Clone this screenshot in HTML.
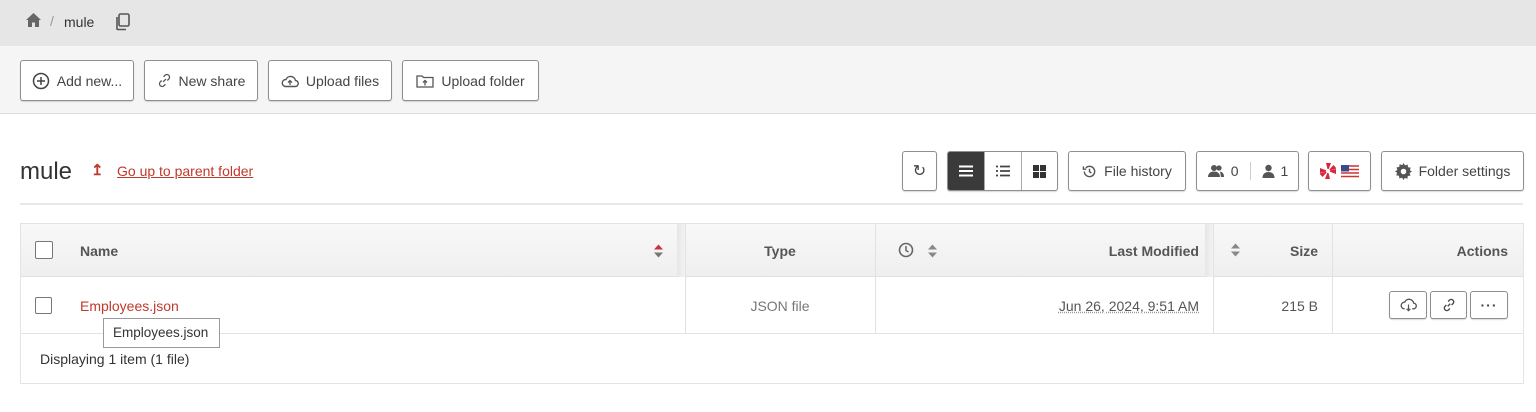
<!DOCTYPE html>
<html><head><style>
*{box-sizing:border-box;margin:0;padding:0}
body{width:1536px;height:412px;background:#fff;font-family:"Liberation Sans",sans-serif;color:#333;position:relative;overflow:hidden;font-size:14px}
.a{position:absolute}
.btn{position:absolute;border:1px solid #8f8f8f;border-radius:3px;background:#fff;display:flex;align-items:center;justify-content:center;gap:7px;font-size:14px;color:#444;box-shadow:0 1px 1px rgba(0,0,0,.15)}
svg{display:block}
.th{position:absolute;top:0;height:53px;display:flex;align-items:center;font-weight:bold;color:#555;font-size:14px}
.vl{position:absolute;top:0;width:1px;background:#e2e2e2}
</style></head><body>
<div class="a" style="left:0;top:0;width:1536px;height:46px;background:#e6e6e6"></div>
<svg class="a" style="left:25px;top:12px" width="17" height="16" viewBox="0 0 16 16"><path d="M8 1L0.5 8h2v7h4v-4.5h3V15h4V8h2z" fill="#666"/></svg>
<div class="a" style="left:50px;top:13px;color:#999">/</div>
<div class="a" style="left:64px;top:14px;font-size:14px;color:#333">mule</div>
<svg class="a" style="left:114px;top:13px" width="17" height="18" viewBox="0 0 17 18"><rect x="5" y="1" width="10" height="12" rx="1.5" fill="none" stroke="#555" stroke-width="1.6"/><path d="M3 4v11.5a1 1 0 0 0 1 1h8" fill="none" stroke="#555" stroke-width="1.6"/></svg>
<div class="a" style="left:0;top:46px;width:1536px;height:68px;background:#f5f5f5;border-bottom:1px solid #ddd"></div>
<div class="btn" style="left:20px;top:60px;width:114px;height:41px"><svg width="18" height="18" viewBox="0 0 18 18"><circle cx="9" cy="9" r="7.5" fill="none" stroke="#444" stroke-width="1.5"/><path d="M9 5v8M5 9h8" stroke="#444" stroke-width="1.5"/></svg>Add new...</div>
<div class="btn" style="left:144px;top:60px;width:114px;height:41px"><svg width="15" height="15" viewBox="0 0 16 16"><path d="M6.5 9.5l3-3M7 4l1.5-1.5a2.8 2.8 0 0 1 4 4L11 8M9 12l-1.5 1.5a2.8 2.8 0 0 1-4-4L5 8" fill="none" stroke="#555" stroke-width="1.4"/></svg>New share</div>
<div class="btn" style="left:268px;top:60px;width:124px;height:41px"><svg width="18" height="14" viewBox="0 0 18 14"><path d="M4.5 12.5h9.5a3 3 0 0 0 .5-6 5 5 0 0 0-9.5-1 3.5 3.5 0 0 0-.5 7z" fill="none" stroke="#555" stroke-width="1.4"/><path d="M9 11V6.5M7 8.5l2-2 2 2" fill="none" stroke="#555" stroke-width="1.3"/></svg>Upload files</div>
<div class="btn" style="left:402px;top:60px;width:137px;height:41px"><svg width="18" height="14" viewBox="0 0 18 14"><path d="M1 2h5l1.5 1.5H17V13H1z" fill="none" stroke="#555" stroke-width="1.3"/><path d="M9 11.5V6.5M7 8.5l2-2 2 2" fill="none" stroke="#555" stroke-width="1.3"/></svg>Upload folder</div>

<div class="a" style="left:20px;top:158px;font-size:24px;color:#333">mule</div>
<div class="a" style="left:91px;top:161px;color:#c0392b;font-size:15px;font-weight:bold">↥</div>
<div class="a" style="left:117px;top:163px;color:#c0392b;text-decoration:underline;font-size:14px">Go up to parent folder</div>

<div class="btn" style="left:902px;top:151px;width:35px;height:40px;font-size:16px">↻</div>
<div class="a" style="left:947px;top:151px;width:111px;height:40px;border:1px solid #8f8f8f;border-radius:3px;background:#fff;overflow:hidden;box-shadow:0 1px 1px rgba(0,0,0,.15)">
<div class="a" style="left:0;top:0;width:37px;height:38px;background:#3a3a3a"></div>
<svg class="a" style="left:11px;top:13px" width="14" height="12" viewBox="0 0 14 12"><path d="M0 1.5h14M0 6h14M0 10.5h14" stroke="#fff" stroke-width="2"/></svg>
<div class="a" style="left:36px;top:0;width:1px;height:38px;background:#aaa"></div>
<svg class="a" style="left:48px;top:13px" width="14" height="12" viewBox="0 0 14 12"><path d="M0 1.5h2M0 6h2M0 10.5h2M4 1.5h10M4 6h10M4 10.5h10" stroke="#444" stroke-width="1.7"/></svg>
<div class="a" style="left:73px;top:0;width:1px;height:38px;background:#aaa"></div>
<svg class="a" style="left:85px;top:13px" width="13" height="13" viewBox="0 0 13 13"><path d="M0 0h6v6H0zM7 0h6v6H7zM0 7h6v6H0zM7 7h6v6H7z" fill="#333"/></svg>
</div>
<div class="btn" style="left:1068px;top:151px;width:118px;height:40px"><svg width="15" height="15" viewBox="0 0 16 16"><path d="M2.5 8a5.5 5.5 0 1 0 1.6-3.9" fill="none" stroke="#555" stroke-width="1.5"/><path d="M1.5 2.5v3h3" fill="none" stroke="#555" stroke-width="1.5"/><path d="M8 5v3.2l2 1.5" fill="none" stroke="#555" stroke-width="1.5"/></svg>File history</div>
<div class="btn" style="left:1196px;top:151px;width:103px;height:40px;gap:6px"><svg width="18" height="14" viewBox="0 0 18 14"><circle cx="7" cy="4" r="3" fill="#555"/><path d="M1 13c0-4 3-5.5 6-5.5s6 1.5 6 5.5z" fill="#555"/><circle cx="12" cy="4" r="2.6" fill="#555"/><path d="M13 7.6c2.5.3 4 2 4 5.4h-3" fill="#555"/></svg>0<span style="width:1px;height:18px;background:#ccc;margin:0 5px"></span><svg width="13" height="14" viewBox="0 0 13 14"><circle cx="6.5" cy="4" r="3.2" fill="#555"/><path d="M0.5 14c0-4.5 3-6 6-6s6 1.5 6 6z" fill="#555"/></svg>1</div>
<div class="btn" style="left:1308px;top:151px;width:63px;height:40px;gap:5px"><svg width="16" height="16" viewBox="0 0 16 16"><g fill="#d7263d"><path d="M8 8L6 0h5z"/><path d="M8 8l8-2v5z" /><path d="M8 8l2 8H5z"/><path d="M8 8L0 10V5z"/><path d="M8 8l5.5-6 3 3.5z"/><path d="M8 8l-5.5 6-3-3.5z"/></g><circle cx="8" cy="8" r="2" fill="#fff"/></svg><svg width="18" height="13" viewBox="0 0 18 13"><rect width="18" height="13" fill="#fff"/><path d="M0 1h18M0 4.5h18M0 8h18M0 11.5h18" stroke="#c33" stroke-width="1.6"/><rect width="8" height="6.5" fill="#3c4a8a"/></svg></div>
<div class="btn" style="left:1381px;top:151px;width:143px;height:40px"><svg width="17" height="17" viewBox="0 0 16 16"><path d="M8 0l1.4 2.2 2.5-.8.3 2.6 2.6.3-.8 2.5L16 8l-2.2 1.4.8 2.5-2.6.3-.3 2.6-2.5-.8L8 16l-1.4-2.2-2.5.8-.3-2.6-2.6-.3.8-2.5L0 8l2.2-1.4-.8-2.5 2.6-.3.3-2.6 2.5.8z" fill="#555"/><circle cx="8" cy="8" r="2.6" fill="#fff"/></svg>Folder settings</div>

<div class="a" style="left:20px;top:203px;width:1503px;height:2px;background:#e8e8e8"></div>

<div class="a" style="left:20px;top:223px;width:1504px;height:161px;border:1px solid #e3e3e3">
<div class="a" style="left:0;top:0;width:1502px;height:53px;background:linear-gradient(#f8f8f8,#efefef);border-bottom:1px solid #e0e0e0"></div>
<div class="a" style="left:14px;top:17px;width:18px;height:18px;border:1.5px solid #777;border-radius:2px;background:#fff"></div>
<div class="th" style="left:59px">Name</div>
<svg class="a" style="left:632px;top:19px" width="11" height="16" viewBox="0 0 11 16"><path d="M1 6.5l4.5-5 4.5 5z" fill="#c8313f"/><path d="M1 9.5l4.5 5 4.5-5z" fill="#777"/></svg>
<div class="a" style="left:656px;top:0;width:8px;height:53px;background:linear-gradient(90deg,#e6e6e6,#f3f3f3)"></div>
<div class="vl" style="left:664px;height:109px"></div>
<div class="th" style="left:664px;width:190px;justify-content:center">Type</div>
<div class="vl" style="left:854px;height:109px"></div>
<svg class="a" style="left:877px;top:18px" width="16" height="16" viewBox="0 0 16 16"><circle cx="8" cy="8" r="6.5" fill="none" stroke="#666" stroke-width="1.6"/><path d="M8 4v4.5l2.5 1.5" fill="none" stroke="#666" stroke-width="1.5"/></svg>
<svg class="a" style="left:906px;top:19px" width="11" height="16" viewBox="0 0 11 16"><path d="M1 6.5l4.5-5 4.5 5zM1 9.5l4.5 5 4.5-5z" fill="#888"/></svg>
<div class="th" style="left:854px;width:324px;justify-content:flex-end">Last Modified</div>
<div class="a" style="left:1184px;top:0;width:8px;height:53px;background:linear-gradient(90deg,#e6e6e6,#f3f3f3)"></div>
<div class="vl" style="left:1192px;height:109px"></div>
<svg class="a" style="left:1209px;top:18px" width="11" height="16" viewBox="0 0 11 16"><path d="M1 6.5l4.5-5 4.5 5zM1 9.5l4.5 5 4.5-5z" fill="#888"/></svg>
<div class="th" style="left:1192px;width:105px;justify-content:flex-end">Size</div>
<div class="vl" style="left:1311px;height:109px"></div>
<div class="th" style="left:1311px;width:176px;justify-content:flex-end">Actions</div>

<div class="a" style="left:14px;top:73px;width:17px;height:17px;border:1.5px solid #777;border-radius:2px;background:#fff"></div>
<div class="a" style="left:59px;top:74px;color:#c0392b">Employees.json</div>
<div class="a" style="left:664px;top:74px;width:190px;text-align:center;color:#777">JSON file</div>
<div class="a" style="left:854px;top:74px;width:324px;text-align:right;color:#555;text-decoration:underline dotted #999">Jun 26, 2024, 9:51 AM</div>
<div class="a" style="left:1192px;top:74px;width:105px;text-align:right;color:#555">215 B</div>
<div class="btn" style="left:1368px;top:67px;width:38px;height:28px"><svg width="17" height="14" viewBox="0 0 18 14"><path d="M5 11H4.5a3.5 3.5 0 0 1 .5-7 5 5 0 0 1 9.5 1 3 3 0 0 1-.5 6H13" fill="none" stroke="#555" stroke-width="1.4"/><path d="M9 6.5v6.5M7 11l2 2 2-2" fill="none" stroke="#555" stroke-width="1.3"/></svg></div>
<div class="btn" style="left:1409px;top:67px;width:37px;height:28px"><svg width="14" height="14" viewBox="0 0 16 16"><path d="M6.5 9.5l3-3M7 4l1.5-1.5a2.8 2.8 0 0 1 4 4L11 8M9 12l-1.5 1.5a2.8 2.8 0 0 1-4-4L5 8" fill="none" stroke="#444" stroke-width="1.6"/></svg></div>
<div class="btn" style="left:1449px;top:67px;width:38px;height:28px;font-weight:bold;letter-spacing:1px">···</div>
<div class="a" style="left:0;top:109px;width:1502px;height:1px;background:#e3e3e3"></div>
<div class="a" style="left:19px;top:127px;color:#333">Displaying 1 item (1 file)</div>
<div class="a" style="left:82px;top:94px;width:117px;height:30px;border:1px solid #999;background:#fff;font-size:13.5px;color:#333;padding:6px 0 0 9px">Employees.json</div>
</div>
</body></html>
